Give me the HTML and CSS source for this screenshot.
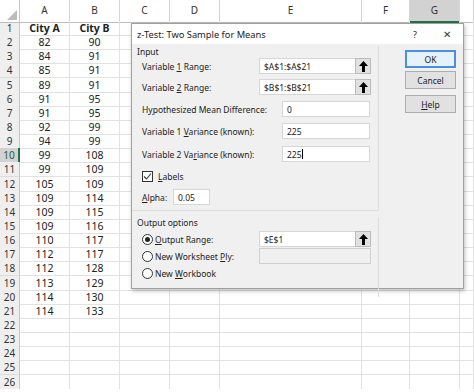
FILE: index.html
```html
<!DOCTYPE html>
<html lang="en">
<head>
  <meta charset="UTF-8" />
  <title>z-Test: Two Sample for Means</title>
  <link rel="stylesheet" href="styles.css">
</head>
<body>
  <div class="sheet" id="sheet">
    <div class="row head">
      <div class="rh corner"><span class="tri"></span></div>
      <div class="c">A</div>
      <div class="c">B</div>
      <div class="c">C</div>
      <div class="c">D</div>
      <div class="c">E</div>
      <div class="c">F</div>
      <div class="c sel">G</div>
      <div class="c"></div>
    </div>
  </div>

  <div class="dialog">
    <div class="titlebar">
      <span class="title">z-Test: Two Sample for Means</span>
      <span class="help-q">?</span>
      <span class="close">&#x2715;</span>
    </div>
    <div class="dbody">
      <div class="groups">
        <div class="group input-group">
          <div class="glabel">Input</div>
          <div class="field f1">
            <label class="lab wide">Variable <u>1</u> Range:</label>
            <div class="box range"><span>$A$1:$A$21</span><span class="pick"><svg width="9" height="11" viewBox="0 0 9 11"><polygon points="4.5,0 9,5 6,5 6,11 3,11 3,5 0,5" fill="#000"/></svg></span></div>
          </div>
          <div class="field f2">
            <label class="lab wide">Variable <u>2</u> Range:</label>
            <div class="box range"><span>$B$1:$B$21</span><span class="pick"><svg width="9" height="11" viewBox="0 0 9 11"><polygon points="4.5,0 9,5 6,5 6,11 3,11 3,5 0,5" fill="#000"/></svg></span></div>
          </div>
          <div class="field f3">
            <label class="lab wider">H<u>y</u>pothesized Mean Difference:</label>
            <div class="box num"><span>0</span></div>
          </div>
          <div class="field f4">
            <label class="lab wider">Variable 1 <u>V</u>ariance (known):</label>
            <div class="box num"><span>225</span></div>
          </div>
          <div class="field f5">
            <label class="lab wider">Variable 2 Va<u>r</u>iance (known):</label>
            <div class="box num"><span>225</span><span class="caret"></span></div>
          </div>
          <div class="field check-row">
            <span class="check"><svg width="9" height="9" viewBox="0 0 9 9"><polyline points="1,4.5 3.5,7 8,1.5" fill="none" stroke="#333" stroke-width="1.1"/></svg></span>
            <label class="lab"><u>L</u>abels</label>
          </div>
          <div class="field alpha-row">
            <label class="lab short"><u>A</u>lpha:</label>
            <div class="box alpha"><span>0.05</span></div>
          </div>
        </div>
        <div class="group output-group">
          <div class="glabel">Output options</div>
          <div class="field o1">
            <span class="radio on"></span>
            <label class="lab rwide"><u>O</u>utput Range:</label>
            <div class="box range"><span>$E$1</span><span class="pick"><svg width="9" height="11" viewBox="0 0 9 11"><polygon points="4.5,0 9,5 6,5 6,11 3,11 3,5 0,5" fill="#000"/></svg></span></div>
          </div>
          <div class="field o2">
            <span class="radio"></span>
            <label class="lab rwide">New Worksheet <u>P</u>ly:</label>
            <div class="box range off"></div>
          </div>
          <div class="field o3">
            <span class="radio"></span>
            <label class="lab">New <u>W</u>orkbook</label>
          </div>
        </div>
      </div>
      <div class="buttons">
        <button class="btn default">OK</button>
        <button class="btn">Cancel</button>
        <button class="btn help"><u>H</u>elp</button>
      </div>
    </div>
  </div>

  <script>
    const cityA = [82, 84, 85, 89, 91, 91, 92, 94, 99, 99, 105, 109, 109, 109, 110, 112, 112, 113, 114, 114];
    const cityB = [90, 91, 91, 91, 95, 95, 99, 99, 108, 109, 109, 114, 115, 116, 117, 117, 128, 129, 130, 133];
    const sheet = document.getElementById("sheet");

    for (let r = 1; r <= 26; r++) {
      const row = document.createElement("div");
      row.className = "row";
      let a = "", b = "";
      if (r === 1) { a = "City A"; b = "City B"; }
      else if (r <= 21) { a = cityA[r - 2]; b = cityB[r - 2]; }
      const cells = [r, a, b, "", "", "", "", "", ""];
      cells.forEach((v, i) => {
        const el = document.createElement("div");
        el.className = i === 0 ? "rh" : "c";
        if (i === 0 && r === 10) el.className += " sel";
        if (r === 1 && i > 0) el.className += " bold";
        el.textContent = v;
        row.appendChild(el);
      });
      sheet.appendChild(row);
    }
  </script>
</body>
</html>
```

FILE: styles.css
```css
body {
  margin: 0;
  background: #fff;
  font-family: 'Noto Sans', sans-serif;
  color: #222;
  overflow: hidden;
}
.sheet {
  width: 474px;
}
.row {
  display: grid;
  grid-template-columns: 20px 50px 50px 50px 50px 142px 48px 50px 1fr;
  height: 14.15px;
  font-size: 10.5px;
  line-height: 14px;
}
.row.head {
  height: 21px;
  line-height: 21px;
  background: #fff;
  font-size: 10px;
  color: #333;
}
.c {
  border-right: 1px solid #e2e2e2;
  border-bottom: 1px solid #e2e2e2;
  text-align: center;
  box-sizing: border-box;
}
.head .c {
  border-right: 1px solid #d4d4d4;
  border-bottom: 1px solid #bdbdbd;
  background: #fff;
}
.head .c.sel {
  background: #d2d2d2;
  border-bottom: 2px solid #217346;
}
.rh {
  background: #efefef;
  border-right: 1px solid #c6c6c6;
  border-bottom: 1px solid #dcdcdc;
  text-align: center;
  box-sizing: border-box;
  font-size: 10px;
  color: #333;
}
.rh.sel {
  background: #d2d2d2;
  border-right: 2px solid #217346;
  color: #1e5c3a;
}
.corner {
  position: relative;
  background: #fff;
  border-bottom: 1px solid #bdbdbd;
}
.tri {
  position: absolute;
  right: 2px;
  bottom: 2px;
  width: 0;
  height: 0;
  border-left: 10px solid transparent;
  border-bottom: 10px solid #bcbcbc;
}
.bold {
  font-weight: bold;
}

/* dialog */
.dialog {
  position: absolute;
  left: 131px;
  top: 23px;
  width: 333px;
  height: 266px;
  box-sizing: border-box;
  border: 1px solid #a0a0a0;
  background: #f0f0f0;
  box-shadow: 1px 2px 4px rgba(0, 0, 0, 0.25);
  font-size: 8.5px;
  color: #222;
}
.titlebar {
  display: flex;
  align-items: center;
  height: 20px;
  background: #fff;
  padding-left: 5px;
  font-size: 9.3px;
}
.title {
  flex: 1;
}
.help-q {
  width: 30px;
  font-size: 9px;
}
.close {
  width: 20px;
  font-size: 10px;
  color: #333;
}
.dbody {
  display: flex;
}
.groups {
  width: 247px;
}
.group {
  border-right: 1px solid #dcdcdc;
  border-bottom: 1px solid #dcdcdc;
  padding-left: 10px;
}
.input-group {
  height: 164px;
}
.output-group {
  height: 80px;
  border-bottom: none;
}
.glabel {
  height: 12px;
  line-height: 12px;
  margin-left: -5px;
  margin-top: 2px;
}
.field {
  display: flex;
  align-items: center;
  height: 16px;
}
.f1 { margin-top: 0; }
.f2 { margin-top: 5px; }
.f3 { margin-top: 6px; }
.f4 { margin-top: 6px; }
.f5 { margin-top: 7px; }
.lab {
  white-space: nowrap;
}
.lab.wide { width: 117px; }
.lab.wider { width: 140px; }
.lab.short { width: 31px; }
.lab.rwide { width: 104px; }
.box {
  display: flex;
  align-items: center;
  height: 16px;
  box-sizing: border-box;
  background: #fff;
  border: 1px solid #d6d6d6;
  padding-left: 4px;
}
.box.range { width: 112px; justify-content: space-between; padding-right: 0; }
.box.num { width: 88px; }
.box.alpha { width: 37px; }
.box.off {
  background: #f0f0f0;
  border-color: #d0d0d0;
}
.pick {
  display: flex;
  align-items: center;
  justify-content: center;
  width: 16px;
  height: 16px;
  margin: -1px -1px -1px 0;
  box-sizing: border-box;
  background: #e1e1e1;
  border: 1px solid #bcbcbc;
}
.caret {
  width: 1px;
  height: 10px;
  background: #000;
}
.check-row {
  margin-top: 6px;
}
.check {
  display: flex;
  align-items: center;
  justify-content: center;
  width: 11px;
  height: 11px;
  box-sizing: border-box;
  border: 1px solid #333;
  background: #fff;
  margin-right: 5px;
}
.alpha-row {
  margin-top: 5px;
}
.output-group .glabel {
  margin-top: 6px;
}
.o1 { margin-top: 2px; }
.o2 { margin-top: 1px; }
.o3 { margin-top: 1px; }
.radio {
  width: 11px;
  height: 11px;
  box-sizing: border-box;
  border: 1px solid #333;
  border-radius: 50%;
  background: #fff;
  margin-right: 2px;
  position: relative;
}
.radio.on::after {
  content: "";
  position: absolute;
  left: 2px;
  top: 2px;
  width: 5px;
  height: 5px;
  border-radius: 50%;
  background: #222;
}
.buttons {
  display: flex;
  flex-direction: column;
  padding-left: 26px;
  padding-top: 6px;
}
.btn {
  width: 51px;
  height: 18px;
  padding: 0;
  font-family: 'Noto Sans', sans-serif;
  font-size: 8.5px;
  color: #222;
  background: #e1e1e1;
  border: 1px solid #adadad;
  margin-bottom: 3px;
}
.btn.default {
  border: 1px solid #4a90d9;
  box-shadow: inset 0 0 0 1px #4a90d9;
  background: #e5f1fb;
}
.btn.help {
  margin-top: 3px;
}
```
